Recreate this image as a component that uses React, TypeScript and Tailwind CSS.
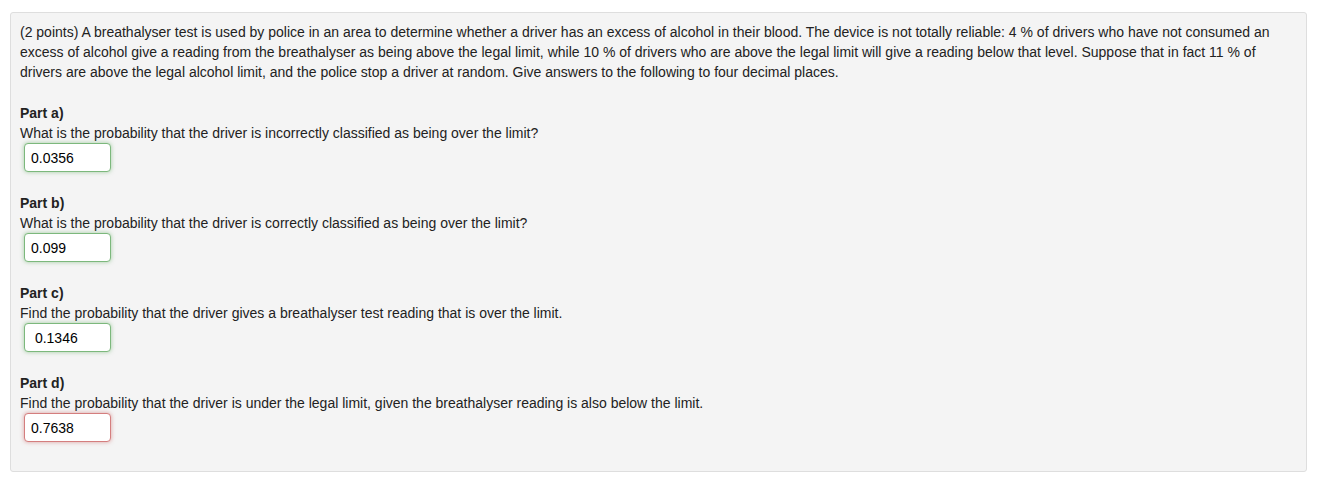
const PARTS = [
  {
    label: 'Part a)',
    question: 'What is the probability that the driver is incorrectly classified as being over the limit?',
    answer: '0.0356',
    correct: true,
  },
  {
    label: 'Part b)',
    question: 'What is the probability that the driver is correctly classified as being over the limit?',
    answer: '0.099',
    correct: true,
  },
  {
    label: 'Part c)',
    question: 'Find the probability that the driver gives a breathalyser test reading that is over the limit.',
    answer: ' 0.1346',
    correct: true,
  },
  {
    label: 'Part d)',
    question: 'Find the probability that the driver is under the legal limit, given the breathalyser reading is also below the limit.',
    answer: '0.7638',
    correct: false,
  },
];

export default function App() {
  return (
    <div className="min-h-screen bg-white pt-3 pl-[10px] pr-[31px] font-['Liberation_Sans',Arial,sans-serif] text-[14px] leading-5 text-[#222]">
      <div className="flex flex-col gap-[21px] rounded-[3px] border border-[#dedede] bg-[#f4f4f4] pt-[9px] pl-[9px] pr-4 pb-[29px]">
        <p>
          (2 points) A breathalyser test is used by police in an area to determine whether a driver has an excess of alcohol in their blood. The device is not totally reliable: 4 % of drivers who have not consumed an excess of alcohol give a reading from the breathalyser as being above the legal limit, while 10 % of drivers who are above the legal limit will give a reading below that level. Suppose that in fact 11 % of drivers are above the legal alcohol limit, and the police stop a driver at random. Give answers to the following to four decimal places.
        </p>

        <div className="flex flex-col gap-[21px]">
          {PARTS.map(part => (
            <div key={part.label} className="flex flex-col">
              <p className="font-bold">{part.label}</p>
              <p>{part.question}</p>
              <div className="pl-1">
                <input
                  readOnly
                  value={part.answer}
                  className={
                    part.correct
                      ? 'block h-[29px] w-[87px] rounded border border-[#7cb87c] bg-white px-[6px] text-[14px] text-black shadow-[0_0_4px_rgba(92,170,92,0.55)] outline-none'
                      : 'block h-[29px] w-[87px] rounded border border-[#d47e7e] bg-white px-[6px] text-[14px] text-black shadow-[0_0_4px_rgba(200,90,90,0.55)] outline-none'
                  }
                />
              </div>
            </div>
          ))}
        </div>
      </div>
    </div>
  );
}
